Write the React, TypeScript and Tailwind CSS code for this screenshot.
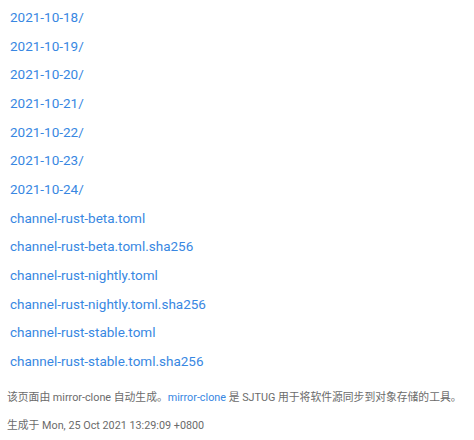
const entries = [
  '2021-10-18/',
  '2021-10-19/',
  '2021-10-20/',
  '2021-10-21/',
  '2021-10-22/',
  '2021-10-23/',
  '2021-10-24/',
  'channel-rust-beta.toml',
  'channel-rust-beta.toml.sha256',
  'channel-rust-nightly.toml',
  'channel-rust-nightly.toml.sha256',
  'channel-rust-stable.toml',
  'channel-rust-stable.toml.sha256',
]

export default function App() {
  return (
    <div
      className="min-h-[440px] bg-white pt-[3px]"
      style={{ fontFamily: 'Roboto, "Noto Sans CJK SC", sans-serif' }}
    >
      <ul className="flex flex-col px-[10px]">
        {entries.map((name) => (
          <li key={name} className="h-[28.67px] leading-[28.67px]">
            <a href="#" className="text-[13.5px] text-[#3887e2] no-underline">
              {name}
            </a>
          </li>
        ))}
      </ul>
      <div className="mt-[8px] flex flex-col px-[7px] text-[10.8px] text-[#6b6b6b]">
        <p className="h-[28px] whitespace-nowrap leading-[28px]">
          该页面由 mirror-clone 自动生成。
          <a href="#" className="text-[#3887e2]">
            mirror-clone
          </a>{' '}
          是 SJTUG 用于将软件源同步到对象存储的工具。
        </p>
        <p className="h-[28px] leading-[28px]">生成于 Mon, 25 Oct 2021 13:29:09 +0800</p>
      </div>
    </div>
  )
}
